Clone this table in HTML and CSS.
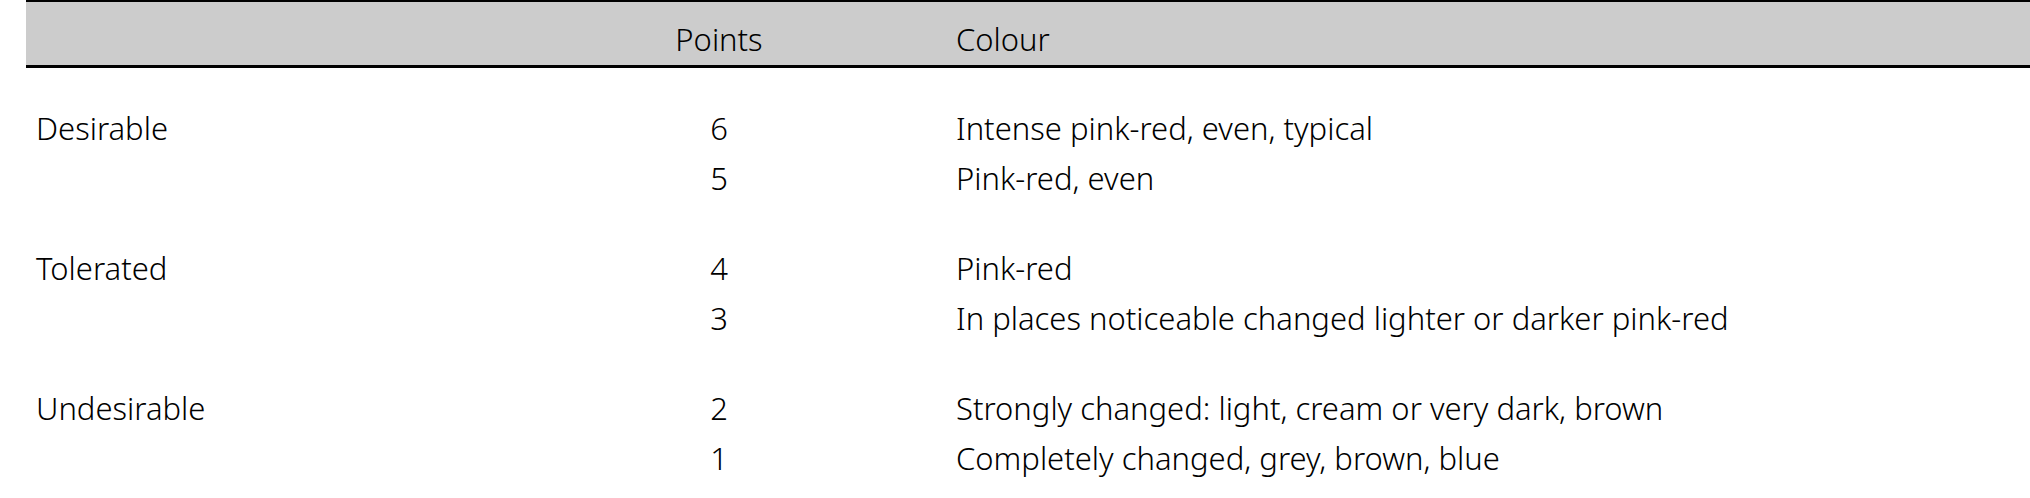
FILE: index.html
```html
<!DOCTYPE html>
<html lang="en">
<head>
<meta charset="utf-8">
<title>Colour points</title>
<link rel="stylesheet" href="styles.css">
</head>
<body>
<table class="grading">
  <colgroup>
    <col class="col-class">
    <col class="col-points">
    <col class="col-colour">
  </colgroup>
  <thead>
    <tr>
      <th class="c-class"></th>
      <th class="c-points">Points</th>
      <th class="c-colour">Colour</th>
    </tr>
  </thead>
  <tbody class="group first">
    <tr>
      <td class="c-class">Desirable</td>
      <td class="c-points">6</td>
      <td class="c-colour">Intense pink-red, even, typical</td>
    </tr>
    <tr>
      <td class="c-class"></td>
      <td class="c-points">5</td>
      <td class="c-colour">Pink-red, even</td>
    </tr>
  </tbody>
  <tbody class="group">
    <tr>
      <td class="c-class">Tolerated</td>
      <td class="c-points">4</td>
      <td class="c-colour">Pink-red</td>
    </tr>
    <tr>
      <td class="c-class"></td>
      <td class="c-points">3</td>
      <td class="c-colour">In places noticeable changed lighter or darker pink-red</td>
    </tr>
  </tbody>
  <tbody class="group">
    <tr>
      <td class="c-class">Undesirable</td>
      <td class="c-points">2</td>
      <td class="c-colour">Strongly changed: light, cream or very dark, brown</td>
    </tr>
    <tr>
      <td class="c-class"></td>
      <td class="c-points">1</td>
      <td class="c-colour">Completely changed, grey, brown, blue</td>
    </tr>
  </tbody>
</table>
</body>
</html>
```

FILE: styles.css
```css
html, body {
  margin: 0;
  padding: 0;
  background: #ffffff;
}

body {
  font-family: "Noto Sans", "Open Sans", "DejaVu Sans", sans-serif;
  font-weight: 300;
  font-size: 31px;
  line-height: 40px;
  color: #000000;
}

.grading {
  margin-left: 26px;
  width: calc(100% - 26px);
  border-collapse: collapse;
  table-layout: fixed;
}

.col-class { width: 466px; }
.col-points { width: 454px; }

.grading th,
.grading td {
  padding: 5px 10px;
  text-align: left;
  vertical-align: top;
  font-weight: 300;
}

.grading thead th {
  background: #cccccc;
  border-top: 2px solid #000000;
  border-bottom: 3px solid #000000;
  padding-top: 17px;
  padding-bottom: 6px;
}

.grading .c-points {
  text-align: center;
}

.group tr:first-child td {
  padding-top: 45px;
}

.group.first tr:first-child td {
  padding-top: 40px;
}
```
